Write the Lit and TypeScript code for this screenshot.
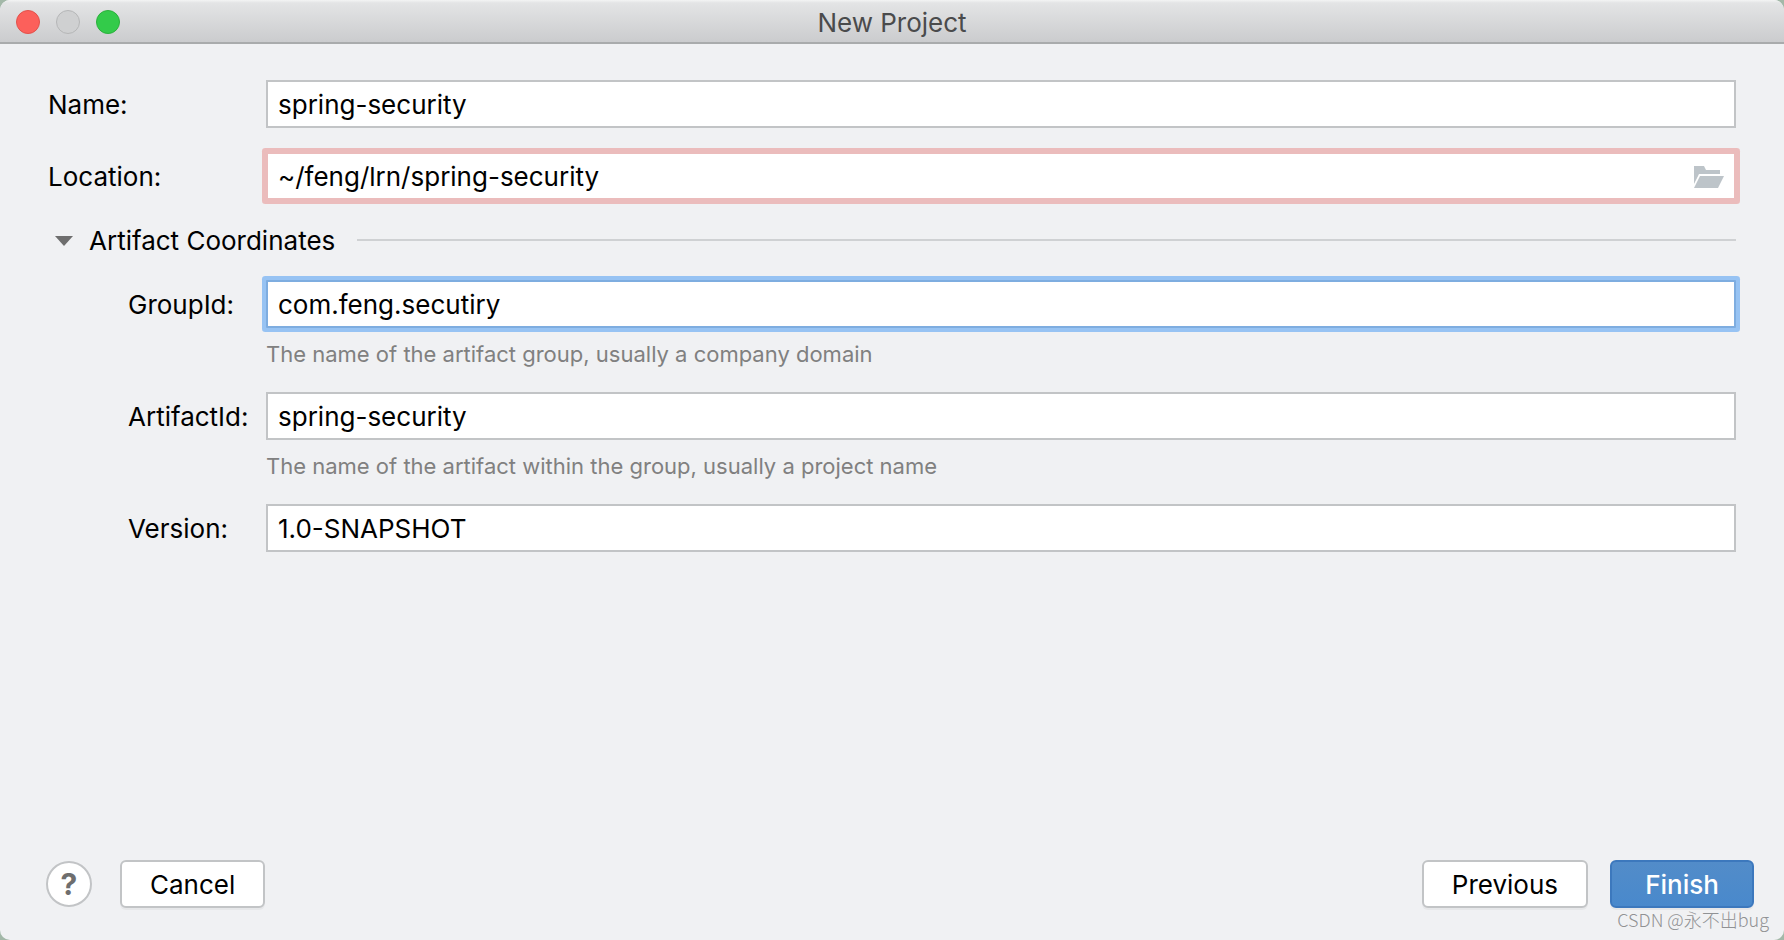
import { LitElement, html, css } from "lit";
import { customElement, property } from "lit/decorators.js";

const folderIcon = html`<svg width="30" height="24" viewBox="0 0 30 24" aria-hidden="true">
  <path fill="#bdc4c9" d="M0 2h10l2 4h14v4H5L0 20z" />
  <path fill="#bdc4c9" d="M6 12h24l-6 12H0z" />
</svg>`;

@customElement("project-field")
export class ProjectField extends LitElement {
  @property() label = "";
  @property() value = "";
  @property() hint = "";
  @property() state = "normal";
  @property({ type: Boolean }) nested = false;
  @property({ type: Boolean }) browse = false;

  static styles = css`
    :host {
      display: block;
    }
    .row {
      display: grid;
      grid-template-columns: 218px 1fr;
      align-items: center;
    }
    label {
      padding-top: 2px;
      line-height: 32px;
      white-space: nowrap;
    }
    .nested {
      padding-left: 80px;
    }
    .box {
      display: flex;
      align-items: center;
      box-sizing: border-box;
      height: 48px;
      padding: 0 10px;
      border: 2px solid #c2c4c6;
      background: #fff;
    }
    .error {
      border-color: #ebbcbc;
      box-shadow: 0 0 0 4px #ebbcbc;
      border-radius: 1px;
    }
    .focused {
      border-color: #7eade0;
      box-shadow: 0 0 0 4px #97c3f3;
      border-radius: 1px;
    }
    input {
      flex: 1;
      min-width: 0;
      border: 0;
      padding: 2px 0 0;
      outline: none;
      background: none;
      color: #000;
      font: inherit;
      line-height: 32px;
    }
    button {
      display: flex;
      border: 0;
      padding: 0;
      background: none;
    }
    .hint {
      grid-column: 2;
      margin: 12px 0 0;
      color: #808080;
      font-size: 22px;
      line-height: 28px;
    }
  `;

  render() {
    return html`<div class="row">
      <label for="field" class=${this.nested ? "nested" : ""}>${this.label}</label>
      <div class="box ${this.state}">
        <input id="field" type="text" spellcheck="false" .value=${this.value} />
        ${this.browse ? html`<button type="button" aria-label="Browse">${folderIcon}</button>` : ""}
      </div>
      ${this.hint ? html`<p class="hint">${this.hint}</p>` : ""}
    </div>`;
  }
}

@customElement("app-root")
export class AppRoot extends LitElement {
  static styles = css`
    :host {
      display: block;
      background: #a3b8a8;
      font-family: Inter, "Noto Sans CJK SC", sans-serif;
      font-size: 26px;
      color: #000;
    }
    .window {
      position: relative;
      display: flex;
      flex-direction: column;
      min-height: 100vh;
      border-radius: 10px;
      overflow: hidden;
      background: #f0f1f3;
    }
    .titlebar {
      display: grid;
      grid-template-columns: 1fr auto 1fr;
      align-items: center;
      box-sizing: border-box;
      height: 44px;
      padding: 2px 16px 0;
      border-bottom: 2px solid #a9abac;
      background: linear-gradient(#f3f4f4, #e3e4e5 3px, #cbccce);
    }
    .lights {
      display: flex;
      gap: 16px;
    }
    .light {
      box-sizing: border-box;
      width: 24px;
      height: 24px;
      padding: 0;
      border: 1px solid #e2514b;
      border-radius: 50%;
      background: #fc605b;
    }
    .minimize {
      border-color: #b5b6b7;
      background: #cfd0d1;
    }
    .zoom {
      border-color: #2bb03c;
      background: #33cb4a;
    }
    h1 {
      margin: 0;
      padding-top: 2px;
      color: #4a4b4c;
      font-size: 26px;
      font-weight: 400;
      line-height: 32px;
    }
    form {
      flex: 1;
      display: flex;
      flex-direction: column;
    }
    .fields {
      flex: 1;
      display: flex;
      flex-direction: column;
      gap: 24px;
      padding: 36px 48px;
    }
    .section {
      display: flex;
      align-items: center;
      gap: 22px;
      height: 32px;
    }
    .toggle {
      display: flex;
      align-items: center;
      gap: 16px;
      border: 0;
      padding: 2px 0 0 7px;
      background: none;
      color: inherit;
      font: inherit;
      line-height: 32px;
    }
    .rule {
      flex: 1;
      height: 2px;
      background: #cfd1d3;
    }
    .footer {
      display: flex;
      align-items: center;
      padding: 0 30px 32px 46px;
    }
    .spacer {
      flex: 1;
    }
    .button {
      box-sizing: border-box;
      min-width: 144px;
      height: 48px;
      padding: 2px 28px 0;
      border: 2px solid #c2c4c6;
      border-radius: 6px;
      background: #fff;
      box-shadow: 0 2px 0 #e6e7e9;
      color: #000;
      font: inherit;
      line-height: 32px;
    }
    .primary {
      margin-left: 22px;
      border-color: #3c78bd;
      background: linear-gradient(#528cc9, #4989cc);
      color: #fff;
      font-weight: 500;
    }
    .help {
      box-sizing: border-box;
      width: 46px;
      height: 46px;
      margin-right: 28px;
      padding: 0;
      border: 2px solid #c2c4c6;
      border-radius: 50%;
      background: #fff;
      color: #6e6e6e;
      font: inherit;
      font-size: 30px;
      font-weight: 700;
      line-height: 40px;
    }
    .watermark {
      position: absolute;
      right: 15px;
      bottom: 8px;
      color: #909294;
      font-family: "Noto Sans CJK SC", sans-serif;
      font-size: 18px;
      font-weight: 300;
      line-height: 26px;
    }
  `;

  render() {
    return html`<main class="window">
      <header class="titlebar">
        <div class="lights">
          <button class="light" type="button" aria-label="Close"></button>
          <button class="light minimize" type="button" aria-label="Minimize" disabled></button>
          <button class="light zoom" type="button" aria-label="Zoom"></button>
        </div>
        <h1>New Project</h1>
      </header>
      <form>
        <div class="fields">
          <project-field label="Name:" value="spring-security"></project-field>
          <project-field label="Location:" value="~/feng/lrn/spring-security" state="error" browse></project-field>
          <div class="section">
            <button class="toggle" type="button" aria-expanded="true">
              <svg width="18" height="10" viewBox="0 0 18 10" aria-hidden="true">
                <path fill="#6e6e6e" d="M0 0h18L9 10z" />
              </svg>
              Artifact Coordinates
            </button>
            <span class="rule"></span>
          </div>
          <project-field
            nested
            label="GroupId:"
            value="com.feng.secutiry"
            state="focused"
            hint="The name of the artifact group, usually a company domain"
          ></project-field>
          <project-field
            nested
            label="ArtifactId:"
            value="spring-security"
            hint="The name of the artifact within the group, usually a project name"
          ></project-field>
          <project-field nested label="Version:" value="1.0-SNAPSHOT"></project-field>
        </div>
        <footer class="footer">
          <button class="help" type="button" aria-label="Help">?</button>
          <button class="button" type="button">Cancel</button>
          <span class="spacer"></span>
          <button class="button" type="button">Previous</button>
          <button class="button primary" type="button">Finish</button>
        </footer>
      </form>
      <span class="watermark">CSDN @永不出bug</span>
    </main>`;
  }
}
